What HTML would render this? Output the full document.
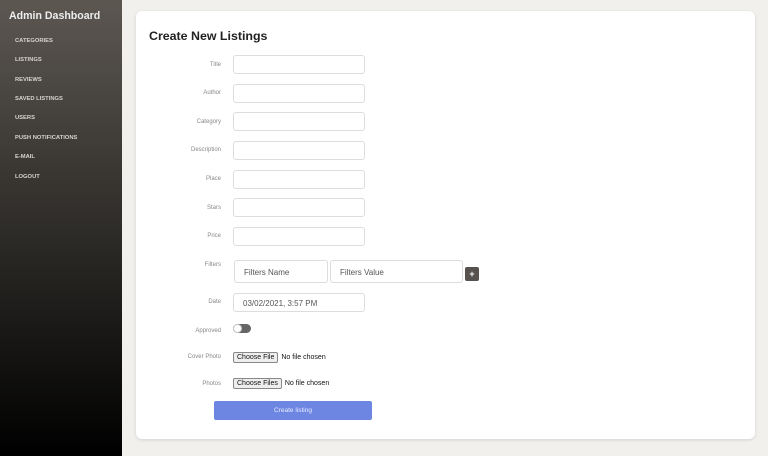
<!DOCTYPE html>
<html><head><style>
*{box-sizing:border-box;margin:0;padding:0}
body{width:768px;height:456px;overflow:hidden;background:#f1f0ed;font-family:"Liberation Sans",sans-serif;position:relative}
.sb{position:absolute;left:0;top:0;width:122px;height:456px;background:linear-gradient(#5c5751,#2a2825 55%,#000)}
.sb h1{position:absolute;left:9px;top:10px;font-size:10.6px;color:#eee;font-weight:bold;white-space:nowrap}
.sb a{position:absolute;left:15px;font-size:5.8px;font-weight:bold;color:#d6d3cf;white-space:nowrap}
.card{position:absolute;left:136px;top:11px;width:619px;height:428px;background:#fff;border-radius:6px;box-shadow:0 1px 3px rgba(0,0,0,.12)}
h2{position:absolute;left:149px;top:29px;font-size:12.4px;font-weight:bold;color:#222}
.l{position:absolute;width:80px;left:141px;text-align:right;font-size:6px;color:#888}
.i{position:absolute;left:233px;width:132px;height:19px;border:1px solid #ddd;border-radius:3px;background:#fff;font-size:8px;color:#555;padding:5px 9px}
.fb{position:absolute;font-size:7px;color:#111}
.fb span{display:inline-block;border:1px solid #888;background:#eee;border-radius:2px;padding:1px 3px;margin-right:3px}
</style></head><body>
<div class="sb"><h1>Admin Dashboard</h1>
<a style="top:38px">CATEGORIES</a><a style="top:57px">LISTINGS</a><a style="top:77px">REVIEWS</a><a style="top:96px">SAVED LISTINGS</a><a style="top:115px">USERS</a><a style="top:135px">PUSH NOTIFICATIONS</a><a style="top:154px">E-MAIL</a><a style="top:174px">LOGOUT</a></div>
<div class="card"></div>
<h2>Create New Listings</h2>
<div class="l" style="top:62px">Title</div><div class="i" style="top:55px"></div>
<div class="l" style="top:90px">Author</div><div class="i" style="top:84px"></div>
<div class="l" style="top:119px">Category</div><div class="i" style="top:112px"></div>
<div class="l" style="top:147px">Description</div><div class="i" style="top:141px"></div>
<div class="l" style="top:176px">Place</div><div class="i" style="top:170px"></div>
<div class="l" style="top:205px">Stars</div><div class="i" style="top:198px"></div>
<div class="l" style="top:233px">Price</div><div class="i" style="top:227px"></div>
<div class="l" style="top:262px">Filters</div>
<div class="i" style="top:260px;left:234px;width:94px;height:23px;padding:7px 9px">Filters Name</div>
<div class="i" style="top:260px;left:330px;width:133px;height:23px;padding:7px 9px">Filters Value</div>
<div style="position:absolute;left:465px;top:267px;width:14px;height:14px;background:#57524d;border-radius:2px;color:#fff;font-size:9px;font-weight:bold;text-align:center;line-height:14px">+</div>
<div class="l" style="top:299px">Date</div><div class="i" style="top:293px;height:19px">03/02/2021, 3:57 PM</div>
<div class="l" style="top:328px">Approved</div>
<div style="position:absolute;left:233px;top:324px;width:18px;height:9px;border-radius:5px;background:#666"></div>
<div style="position:absolute;left:233px;top:324px;width:9px;height:9px;border-radius:50%;background:#fff;border:1px solid #ccc"></div>
<div class="l" style="top:354px">Cover Photo</div><div class="fb" style="left:233px;top:352px"><span>Choose File</span>No file chosen</div>
<div class="l" style="top:381px">Photos</div><div class="fb" style="left:233px;top:378px"><span>Choose Files</span>No file chosen</div>
<div style="position:absolute;left:214px;top:401px;width:158px;height:19px;background:#6c86e2;border-radius:2px;color:#e8ecff;font-size:6.5px;text-align:center;line-height:19px">Create listing</div>
</body></html>
